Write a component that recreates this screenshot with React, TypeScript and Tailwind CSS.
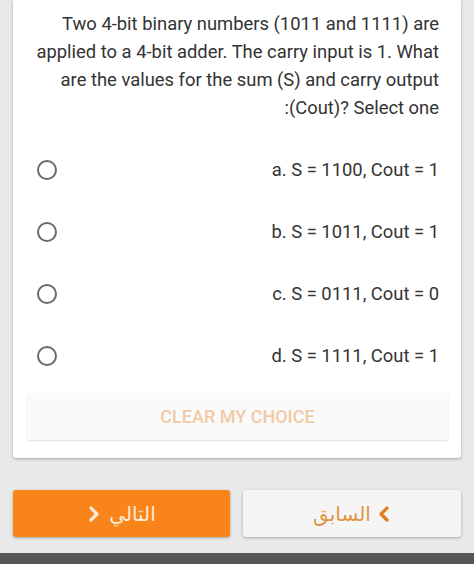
import React from 'react';

const options = [
  'a. S = 1100, Cout = 1',
  'b. S = 1011, Cout = 1',
  'c. S = 0111, Cout = 0',
  'd. S = 1111, Cout = 1',
];

function Chevron({ dir, className }: { dir: 'left' | 'right'; className?: string }) {
  return (
    <svg width="14" height="18" viewBox="0 0 14 18" className={className}>
      <path
        d={dir === 'right' ? 'M4 3 L10 9 L4 15' : 'M10 3 L4 9 L10 15'}
        fill="none"
        stroke="currentColor"
        strokeWidth="3.2"
        strokeLinecap="round"
        strokeLinejoin="round"
      />
    </svg>
  );
}

export default function App() {
  return (
    <div
      className="w-[474px] h-[564px] bg-[#e9e9e9] flex flex-col overflow-hidden"
      style={{ fontFamily: 'Roboto, "DejaVu Sans", sans-serif' }}
    >
      <div className="mx-[13px] bg-white pt-[10px] pb-[18px] shadow-[0_1px_3px_rgba(0,0,0,0.3)] rounded-b-[3px]">
        <p className="px-[22px] text-right text-[18.4px] leading-[28px] text-[#333]">
          Two 4-bit binary numbers (1011 and 1111) are applied to a 4-bit adder. The carry input is 1. What are the values for the sum (S) and carry output{' '}
          <span className="whitespace-nowrap">:(Cout)?</span> Select one
        </p>
        <div className="mt-[17px]">
          {options.map((o) => (
            <div key={o} className="h-[62px] flex items-center justify-between pl-[24px] pr-[22px]">
              <span className="w-[20px] h-[20px] rounded-full border-[2px] border-[#6a6a6a]" />
              <span className="text-[18.4px] text-[#333]">{o}</span>
            </div>
          ))}
        </div>
        <div className="mt-[6px] ml-[14px] mr-[13px] h-[47px] bg-[#fafafa] shadow-[0_1px_2px_rgba(0,0,0,0.14)] rounded-[2px] flex items-center justify-center">
          <span className="text-[18px] font-medium text-[#f2caa4]">CLEAR MY CHOICE</span>
        </div>
      </div>

      <div className="mt-[32px] mx-[13px] flex gap-[13px]">
        <button className="w-[217px] h-[47px] bg-[#f8841a] rounded-[3px] shadow-[0_1px_3px_rgba(0,0,0,0.3)] flex items-center justify-center gap-[8px] text-[#fdebd8]">
          <Chevron dir="right" />
          <span className="text-[20px]" dir="rtl">التالي</span>
        </button>
        <button className="w-[218px] h-[47px] bg-[#f5f5f5] rounded-[3px] shadow-[0_1px_3px_rgba(0,0,0,0.3)] flex items-center justify-center gap-[6px] text-[#e0943f]">
          <span className="text-[20px]" dir="rtl">السابق</span>
          <Chevron dir="left" className="text-[#e07f1f]" />
        </button>
      </div>

      <div className="mt-auto h-[11px] bg-[#555]" />
    </div>
  );
}
